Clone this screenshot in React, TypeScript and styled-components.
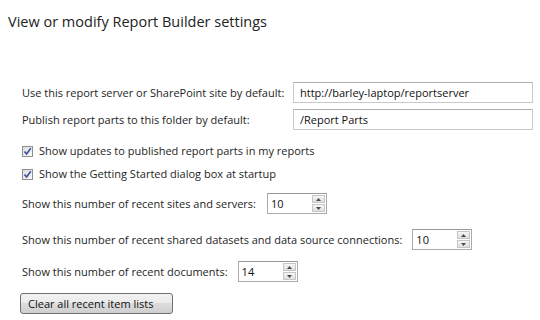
import styled, { createGlobalStyle } from 'styled-components'

const GlobalStyle = createGlobalStyle`
  html, body {
    margin: 0;
    padding: 0;
    background: #fff;
  }
  body {
    font-family: "Open Sans", "Noto Sans", sans-serif;
    color: #1e1e1e;
  }
`

const Page = styled.div`
  width: 540px;
  height: 320px;
  padding: 12px 0 0 8px;
  box-sizing: border-box;
  overflow: hidden;
`

const Title = styled.h1`
  margin: 0 0 50px;
  font-size: 14.5px;
  font-weight: 400;
  line-height: 20px;
  color: #222;
`

const Form = styled.div`
  display: flex;
  flex-direction: column;
  padding-left: 14px;
`

const Row = styled.div<{ $gap?: number; $mb?: number }>`
  display: flex;
  align-items: center;
  gap: ${p => p.$gap ?? 10}px;
  margin-bottom: ${p => p.$mb ?? 6}px;
`

const Label = styled.span<{ $w?: number }>`
  font-size: 11px;
  line-height: 14px;
  white-space: nowrap;
  width: ${p => (p.$w ? `${p.$w}px` : 'auto')};
`

const TextBox = styled.div`
  width: 240px;
  height: 21px;
  box-sizing: border-box;
  border: 1px solid #c9c9c9;
  border-top-color: #b0b0b0;
  padding: 2px 6px;
  font-size: 11px;
  line-height: 15px;
  color: #111;
`

const Checks = styled.div`
  display: flex;
  flex-direction: column;
  gap: 9px;
  margin: 3px 0 12px;
`

const CheckRow = styled.label`
  display: flex;
  align-items: center;
  gap: 6px;
  font-size: 11px;
  line-height: 14px;
`

const Check = styled.span`
  width: 11px;
  height: 11px;
  box-sizing: border-box;
  border: 1px solid #8f8f8f;
  background: linear-gradient(135deg, #dcdcdc, #fafafa);
  display: flex;
  align-items: center;
  justify-content: center;
`

const Spinner = styled.div`
  display: flex;
  width: 60px;
  height: 21px;
  box-sizing: border-box;
  border: 1px solid #aaa;
  border-top-color: #999;
  background: #fff;
`

const SpinValue = styled.span`
  flex: 1;
  padding: 2px 3px;
  font-size: 11px;
  line-height: 15px;
  color: #111;
`

const SpinButtons = styled.div`
  display: flex;
  flex-direction: column;
  width: 13px;
  padding: 1px 1px 1px 0;
  gap: 1px;
`

const SpinBtn = styled.div`
  flex: 1;
  border: 1px solid #c6c6c6;
  background: linear-gradient(#f6f6f6, #dedede);
  display: flex;
  align-items: center;
  justify-content: center;
`

const Button = styled.div`
  width: 153px;
  height: 21px;
  box-sizing: border-box;
  margin-top: 11px;
  margin-left: -2px;
  border: 1px solid #707070;
  border-radius: 3px;
  background: linear-gradient(#f2f2f2 0%, #ebebeb 45%, #dddddd 50%, #cfcfcf 100%);
  font-size: 11px;
  line-height: 19px;
  padding-left: 7px;
  color: #111;
`

const Tick = () => (
  <svg width="9" height="9" viewBox="0 0 9 9">
    <path d="M1.5 4.5 L3.6 7 L7.8 1.2" stroke="#3b4fa0" strokeWidth="1.6" fill="none" />
  </svg>
)

const Arrow = ({ up }: { up?: boolean }) => (
  <svg width="5" height="3" viewBox="0 0 5 3">
    <path d={up ? 'M0 3 L2.5 0 L5 3 Z' : 'M0 0 L2.5 3 L5 0 Z'} fill="#4a4a4a" />
  </svg>
)

function NumberBox({ value }: { value: number }) {
  return (
    <Spinner>
      <SpinValue>{value}</SpinValue>
      <SpinButtons>
        <SpinBtn><Arrow up /></SpinBtn>
        <SpinBtn><Arrow /></SpinBtn>
      </SpinButtons>
    </Spinner>
  )
}

export default function App() {
  return (
    <>
      <GlobalStyle />
      <Page>
        <Title>View or modify Report Builder settings</Title>
        <Form>
          <Row $mb={6}>
            <Label $w={261}>Use this report server or SharePoint site by default:</Label>
            <TextBox>http://barley-laptop/reportserver</TextBox>
          </Row>
          <Row $mb={11}>
            <Label $w={261}>Publish report parts to this folder by default:</Label>
            <TextBox>/Report Parts</TextBox>
          </Row>
          <Checks>
            <CheckRow>
              <Check><Tick /></Check>
              Show updates to published report parts in my reports
            </CheckRow>
            <CheckRow>
              <Check><Tick /></Check>
              Show the Getting Started dialog box at startup
            </CheckRow>
          </Checks>
          <Row $mb={15} $gap={11}>
            <Label>Show this number of recent sites and servers:</Label>
            <NumberBox value={10} />
          </Row>
          <Row $mb={11}>
            <Label>Show this number of recent shared datasets and data source connections:</Label>
            <NumberBox value={10} />
          </Row>
          <Row $mb={0}>
            <Label>Show this number of recent documents:</Label>
            <NumberBox value={14} />
          </Row>
          <Button>Clear all recent item lists</Button>
        </Form>
      </Page>
    </>
  )
}
